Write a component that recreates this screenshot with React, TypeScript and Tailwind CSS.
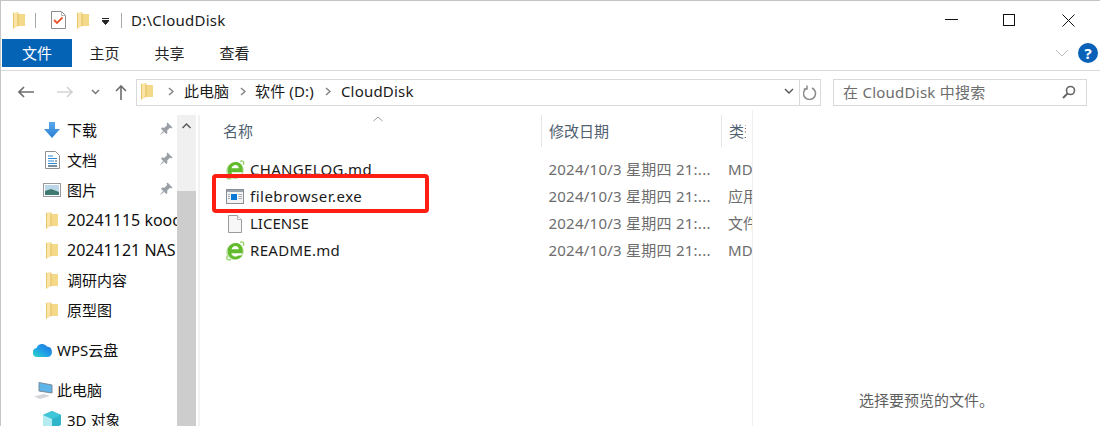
import React from "react";

const FONT = "font-['Noto_Sans','Noto_Sans_CJK_SC',sans-serif]";

// stray pixels of the desktop showing along the left edge of the window
const EDGE_SPOTS = [
  { top: 15, height: 4, color: "#e8743b" },
  { top: 36, height: 3, color: "#1f78c8" },
  { top: 145, height: 3, color: "#3a8fd0" },
  { top: 222, height: 1, color: "#222222" },
  { top: 229, height: 1, color: "#222222" },
  { top: 261, height: 1, color: "#222222" },
  { top: 263, height: 12, color: "#b08a45" },
  { top: 275, height: 1, color: "#222222" },
  { top: 362, height: 5, color: "#e8241a" },
  { top: 376, height: 3, color: "#2b86d0" },
  { top: 382, height: 12, color: "#1673c4" },
  { top: 396, height: 4, color: "#1673c4" },
  { top: 412, height: 4, color: "#e8241a" },
];

const Folder = ({ className = "" }: { className?: string }) => (
  <svg width="12" height="17" viewBox="0 0 12 17" className={className}>
    <rect x="3" y="2" width="9" height="12" fill="#f5d98a" />
    <path d="M0 1 L4.5 0 L4.5 14.5 L0 16.8 Z" fill="#fbe5a6" />
    <path d="M4.5 0 L4.5 14.5 L5.5 14 L5.5 1 Z" fill="#e6bf62" />
    <path d="M0 1 L1 0.8 L1 16.3 L0 16.8 Z" fill="#e8c56c" />
  </svg>
);

const Pin = () => (
  <svg width="14" height="14" viewBox="0 0 14 14">
    <path d="M8.5 0.5 L13.5 5.5 L12.3 6.5 L11 5.8 L8.2 8.5 L8.4 11 L7.2 12 L2 6.8 L3 5.6 L5.5 5.8 L8.2 3 L7.5 1.7 Z" fill="#9aa0a6" />
    <path d="M4 9 L0.5 13.5 L5 10 Z" fill="#9aa0a6" />
  </svg>
);

const EdgeIcon = () => (
  <svg width="19" height="20" viewBox="0 0 19 20">
    <ellipse cx="9" cy="10.5" rx="8.2" ry="7.6" fill="none" stroke="#c3e4ac" strokeWidth="1.4" transform="rotate(-25 9 10.5)" />
    <g transform="translate(9.3 10.2) scale(1.22) translate(-9.5 -10.2)">
      <path d="M15.6 9.8 C15.6 5.5 12.8 3.5 9.8 3.5 C6 3.5 3.2 6.5 3.2 10.3 C3.2 14.3 6 16.8 9.8 16.8 C12.2 16.8 14.2 15.7 15.2 13.8 L11.8 13.8 C11.2 14.4 10.6 14.6 9.8 14.6 C7.8 14.6 6.4 13.4 6.3 11.8 L15.6 11.8 Z M6.4 8.6 C6.7 7 8 5.9 9.7 5.9 C11.2 5.9 12.3 7 12.4 8.6 Z" fill="#62bb2c" fillRule="evenodd" />
    </g>
    <path d="M14 1.5 C16.5 0.2 18.5 1.2 17.4 4.8 M1.5 14.5 C0 17.5 1 19.6 5 18.6" fill="none" stroke="#8fd063" strokeWidth="1.3" />
  </svg>
);

const NavRow = ({ label, icon, pin, indent = true, mt = "", wide = false }: { label: string; icon: React.ReactNode; pin?: boolean; indent?: boolean; mt?: string; wide?: boolean }) => (
  <div className={`h-[30px] flex items-center shrink-0 relative ${indent ? "pl-[36px]" : "pl-[28px]"} ${mt}`}>
    <span className={`flex justify-center shrink-0 ${indent ? "w-[30px]" : "w-[28px]"}`}>{icon}</span>
    <span className={`whitespace-nowrap text-[#101010] ${wide ? "text-[16px]" : "text-[15px]"}`}>{label}</span>
    {pin && (
      <span className="absolute left-[158px] top-[7px]">
        <Pin />
      </span>
    )}
  </div>
);

const FileRow = ({ name, type, icon, nameClass = "tracking-[0.3px]" }: { name: string; type: string; icon: React.ReactNode; nameClass?: string }) => (
  <div className="h-[27px] flex items-center text-[15px] shrink-0">
    <div className="w-[36px] flex justify-center pl-[6px] shrink-0">{icon}</div>
    <div className={`w-[299px] text-[#1a1a1a] whitespace-nowrap ${nameClass}`}>{name}</div>
    <div className="w-[180px] text-[#6d6d6d] whitespace-nowrap tracking-[0.25px]">2024/10/3 星期四 21:...</div>
    <div className="text-[#6d6d6d] w-[24px] overflow-hidden whitespace-nowrap">{type}</div>
  </div>
);

const ExeIcon = () => (
  <svg width="18" height="15" viewBox="0 0 18 15">
    <rect x="0.5" y="0.5" width="17" height="14" fill="#f3f3f3" stroke="#8a8f96" />
    <rect x="1" y="1" width="16" height="2" fill="#9aa3ad" />
    <rect x="5" y="5" width="6" height="6" fill="#0a78d7" />
    <path d="M12.5 5.5 H16 M12.5 7.5 H16 M12.5 9.5 H16 M2 5.5 H4 M2 7.5 H4 M2 9.5 H4" stroke="#a7adb3" />
  </svg>
);

const DocIcon = () => (
  <svg width="14" height="18" viewBox="0 0 14 18">
    <path d="M0.5 0.5 H9.5 L13.5 4.5 V17.5 H0.5 Z" fill="#f7f7f7" stroke="#9b9b9b" />
    <path d="M9.5 0.5 V4.5 H13.5" fill="#ffffff" stroke="#b5b5b5" />
  </svg>
);

const Crumb = ({ className = "" }: { className?: string }) => (
  <svg width="6" height="9" viewBox="0 0 6 9" className={className}>
    <path d="M1 1 L5 4.5 L1 8" fill="none" stroke="#808080" strokeWidth="1.4" />
  </svg>
);

export default function App() {
  return (
    <div className={`w-[1100px] h-[426px] overflow-hidden bg-white relative flex flex-col border-t border-l border-t-[#c4c4c4] border-l-[#c4c4c4] ${FONT}`}>
      {EDGE_SPOTS.map((s) => (
        <div key={s.top} className="absolute -left-px w-px" style={{ top: s.top - 1, height: s.height, background: s.color }} />
      ))}

      {/* title bar */}
      <div className="h-[38px] flex items-center shrink-0">
        <Folder className="ml-[12px]" />
        <div className="ml-[10px] w-px h-[15px] bg-[#a8a8a8]" />
        <svg width="15" height="18" viewBox="0 0 15 18" className="ml-[15px]">
          <path d="M0.5 0.5 H10.5 L14.5 4.5 V17.5 H0.5 Z" fill="#fff" stroke="#8e8e8e" />
          <path d="M10.5 0.5 V4.5 H14.5" fill="none" stroke="#b5b5b5" />
          <path d="M3 9 L6 12 L11.5 6.5" fill="none" stroke="#e8562a" strokeWidth="1.8" />
        </svg>
        <Folder className="ml-[11px]" />
        <svg width="7" height="7" viewBox="0 0 7 7" className="ml-[13px] mt-[3px]">
          <path d="M0 0.5 H7 M0 2.5 H7 L3.5 6.5 Z" stroke="#222" fill="#222" strokeWidth="1" />
        </svg>
        <div className="ml-[12px] w-px h-[15px] bg-[#a8a8a8]" />
        <span className="ml-[9px] text-[15px] tracking-[0.25px] text-[#1a1a1a]">D:\CloudDisk</span>
        <div className="flex-1" />
        <svg width="13" height="2" viewBox="0 0 13 2" className="mr-[45px]"><rect width="13" height="1" fill="#111" /></svg>
        <svg width="12" height="12" viewBox="0 0 12 12" className="mr-[47px]"><rect x="0.5" y="0.5" width="11" height="11" fill="none" stroke="#111" /></svg>
        <svg width="13" height="13" viewBox="0 0 13 13" className="mr-[25px]"><path d="M0.5 0.5 L12.5 12.5 M12.5 0.5 L0.5 12.5" stroke="#111" /></svg>
      </div>

      {/* ribbon tabs */}
      <div className="h-[32px] flex items-start shrink-0 border-b border-[#dadada]">
        <div className="w-[70px] h-[28px] pt-[1px] ml-px bg-[#0563b5] text-white text-[15px] flex items-center justify-center">文件</div>
        <div className="w-[65px] h-[28px] pt-[1px] text-[15px] text-[#222] flex items-center justify-center">主页</div>
        <div className="w-[65px] h-[28px] pt-[1px] text-[15px] text-[#222] flex items-center justify-center">共享</div>
        <div className="w-[65px] h-[28px] pt-[1px] text-[15px] text-[#222] flex items-center justify-center">查看</div>
        <div className="flex-1" />
        <svg width="14" height="8" viewBox="0 0 14 8" className="mt-[10px] mr-[9px]"><path d="M1 1 L7 7 L13 1" fill="none" stroke="#bdbdbd" /></svg>
        <div className="w-[20px] h-[20px] mt-[4px] mr-[2px] rounded-full bg-[#0a62b8] text-white text-[15px] font-bold flex items-center justify-center">?</div>
      </div>

      {/* address bar */}
      <div className="h-[39px] pt-[3px] flex items-center shrink-0">
        <svg width="16" height="12" viewBox="0 0 16 12" className="ml-[17px]"><path d="M6 1 L1 6 L6 11 M1 6 H16" fill="none" stroke="#6d6d6d" strokeWidth="1.6" /></svg>
        <svg width="16" height="12" viewBox="0 0 16 12" className="ml-[23px]"><path d="M10 1 L15 6 L10 11 M0 6 H15" fill="none" stroke="#d4d4d4" strokeWidth="1.6" /></svg>
        <svg width="9" height="6" viewBox="0 0 9 6" className="ml-[18px]"><path d="M1 1 L4.5 4.5 L8 1" fill="none" stroke="#777" strokeWidth="1.5" /></svg>
        <svg width="12" height="15" viewBox="0 0 12 15" className="ml-[15px]"><path d="M1 6 L6 1 L11 6 M6 1 V15" fill="none" stroke="#6d6d6d" strokeWidth="1.6" /></svg>
        <div className="ml-[9px] w-[685px] h-[27px] pb-[2px] border border-[#d9d9d9] flex items-center text-[15px] text-[#1a1a1a]">
          <Folder className="ml-[4px]" />
          <Crumb className="ml-[15px]" />
          <span className="ml-[10px]">此电脑</span>
          <Crumb className="ml-[11px]" />
          <span className="ml-[9px] tracking-[0.15px]">软件 (D:)</span>
          <Crumb className="ml-[11px]" />
          <span className="ml-[10px] tracking-[0.2px]">CloudDisk</span>
          <div className="flex-1" />
          <svg width="10" height="6" viewBox="0 0 10 6" className="mr-[5px]"><path d="M1 1 L5 5 L9 1" fill="none" stroke="#555" strokeWidth="1.4" /></svg>
          <div className="w-[21px] h-[25px] -mb-[2px] border-l border-[#d9d9d9] flex items-center justify-center">
            <svg width="14" height="15" viewBox="0 0 14 15"><path d="M4 3 A6 6 0 1 0 9 3 M4 0.5 V4 H0.8" fill="none" stroke="#8a8a8a" strokeWidth="1.5" /></svg>
          </div>
        </div>
        <div className="ml-[12px] w-[254px] h-[27px] border border-[#d9d9d9] flex items-center pl-[9px] pr-[10px] text-[15px] tracking-[0.25px] text-[#6d6d6d]">
          <span>在 CloudDisk 中搜索</span>
          <div className="flex-1" />
          <svg width="14" height="14" viewBox="0 0 14 14"><circle cx="8.5" cy="5.5" r="4" fill="none" stroke="#666" strokeWidth="1.6" /><path d="M5.5 8.5 L1 13" stroke="#666" strokeWidth="2" /></svg>
        </div>
      </div>

      {/* body */}
      <div className="flex-1 flex min-h-0">
        {/* nav pane */}
        <div className="w-[176px] shrink-0 flex flex-col overflow-hidden pt-[5px]">
          <NavRow label="下载" pin icon={
            <svg width="16" height="16" viewBox="0 0 16 16">
              <defs>
                <linearGradient id="dl" x1="0" y1="0" x2="0" y2="1"><stop offset="0" stopColor="#5aa9ea" /><stop offset="1" stopColor="#2a7fd6" /></linearGradient>
              </defs>
              <path d="M5 0 H11 V7 H16 L8 16 L0 7 H5 Z" fill="url(#dl)" />
            </svg>
          } />
          <NavRow label="文档" pin icon={
            <svg width="15" height="18" viewBox="0 0 15 18">
              <path d="M0.5 0.5 H10.5 L14.5 4.5 V17.5 H0.5 Z" fill="#fff" stroke="#8f8f8f" />
              <path d="M3 5 H8 M3 7.5 H12 M3 10 H9 M3 12.5 H12 M3 15 H12" stroke="#2a8ad4" />
              <path d="M10 10 H12 M3 15 H12" stroke="#555" />
            </svg>
          } />
          <NavRow label="图片" pin icon={
            <svg width="18" height="14" viewBox="0 0 18 14">
              <rect x="0.5" y="0.5" width="17" height="13" fill="#fff" stroke="#9a9a9a" />
              <rect x="2" y="2" width="14" height="10" fill="#bcd7ea" />
              <path d="M2 8 L8 6 L16 9 V12 H2 Z" fill="#3f7a6e" />
            </svg>
          } />
          <NavRow label="20241115 kooc" wide icon={<Folder />} />
          <NavRow label="20241121 NAS" wide icon={<Folder />} />
          <NavRow label="调研内容" icon={<Folder />} />
          <NavRow label="原型图" icon={<Folder />} />
          <NavRow label="WPS云盘" indent={false} mt="mt-[10px]" icon={
            <svg width="20" height="14" viewBox="0 0 20 14">
              <defs>
                <linearGradient id="wps" x1="0" y1="1" x2="1" y2="0"><stop offset="0" stopColor="#2ddac5" /><stop offset="0.5" stopColor="#1f9ce8" /><stop offset="1" stopColor="#1c6fdc" /></linearGradient>
              </defs>
              <path d="M4.5 14 A4.5 4.5 0 0 1 3.6 5 A5.8 5.8 0 0 1 14 3.6 A5.3 5.3 0 0 1 15 14 Z" fill="url(#wps)" />
            </svg>
          } />
          <NavRow label="此电脑" indent={false} mt="mt-[10px]" icon={
            <svg width="20" height="17" viewBox="0 0 20 17">
              <path d="M6 0.5 L19 3 V11 L6 9 Z" fill="#5fb4e8" stroke="#7a8a99" />
              <path d="M1 14.5 L11 12 L17 14 L7 17 Z" fill="#d3d7db" />
            </svg>
          } />
          <NavRow label="3D 对象" icon={
            <svg width="18" height="18" viewBox="0 0 18 18">
              <path d="M9 0 L18 4 V14 L9 18 L0 14 V4 Z" fill="#2fb4c9" />
              <path d="M9 0 L18 4 L9 8 L0 4 Z" fill="#3fc6d8" />
              <path d="M0 4 L9 8 V18 L0 14 Z" fill="#b5ecf2" />
            </svg>
          } />
        </div>

        {/* nav scrollbar */}
        <div className="w-[19px] mt-[5px] shrink-0 flex flex-col">
          <div className="h-[76px] bg-[#f0f0f0] flex justify-center pt-[8px] shrink-0">
            <svg width="9" height="6" viewBox="0 0 9 6"><path d="M0.5 5 L4.5 1 L8.5 5" fill="none" stroke="#555" strokeWidth="1.4" /></svg>
          </div>
          <div className="flex-1 bg-[#cdcdcd]" />
        </div>
        <div className="w-[2px] mt-[5px] ml-[2px] bg-[#f2f2f2] shrink-0" />

        {/* file list */}
        <div className="w-[552px] shrink-0 flex flex-col relative pl-[14px]">
          <div className="h-[32px] mt-[5px] flex items-stretch shrink-0 text-[15px] text-[#4f6070] relative">
            <span className="absolute left-[159px] top-[1px]">
              <svg width="10" height="6" viewBox="0 0 10 6"><path d="M0.5 5 L5 1 L9.5 5" fill="none" stroke="#999" /></svg>
            </span>
            <div className="w-[328px] pl-[9px] flex items-center border-r border-[#e5e5e5]">名称</div>
            <div className="w-[180px] pl-[7px] flex items-center border-r border-[#e5e5e5]">修改日期</div>
            <div className="pl-[7px] w-[24px] overflow-hidden whitespace-nowrap flex items-center">类型</div>
          </div>
          <div className="pt-[9px] flex flex-col">
            <FileRow name="CHANGELOG.md" type="MD 文件" icon={<EdgeIcon />} />
            <FileRow name="filebrowser.exe" type="应用程序" icon={<ExeIcon />} nameClass="tracking-[0.5px]" />
            <FileRow name="LICENSE" type="文件" icon={<DocIcon />} nameClass="tracking-[0px]" />
            <FileRow name="README.md" type="MD 文件" icon={<EdgeIcon />} />
          </div>
          {/* annotation */}
          <div className="absolute left-[12px] top-[64px] w-[217px] h-[39px] border-[4px] border-[#ff1f12] rounded-[4px]" />
        </div>

        {/* preview pane */}
        <div className="flex-1 border-l border-[#f0f0f0] flex flex-col justify-end items-center pb-[15px]">
          <span className="text-[15px] text-[#5f5f5f]">选择要预览的文件。</span>
        </div>
      </div>
    </div>
  );
}
